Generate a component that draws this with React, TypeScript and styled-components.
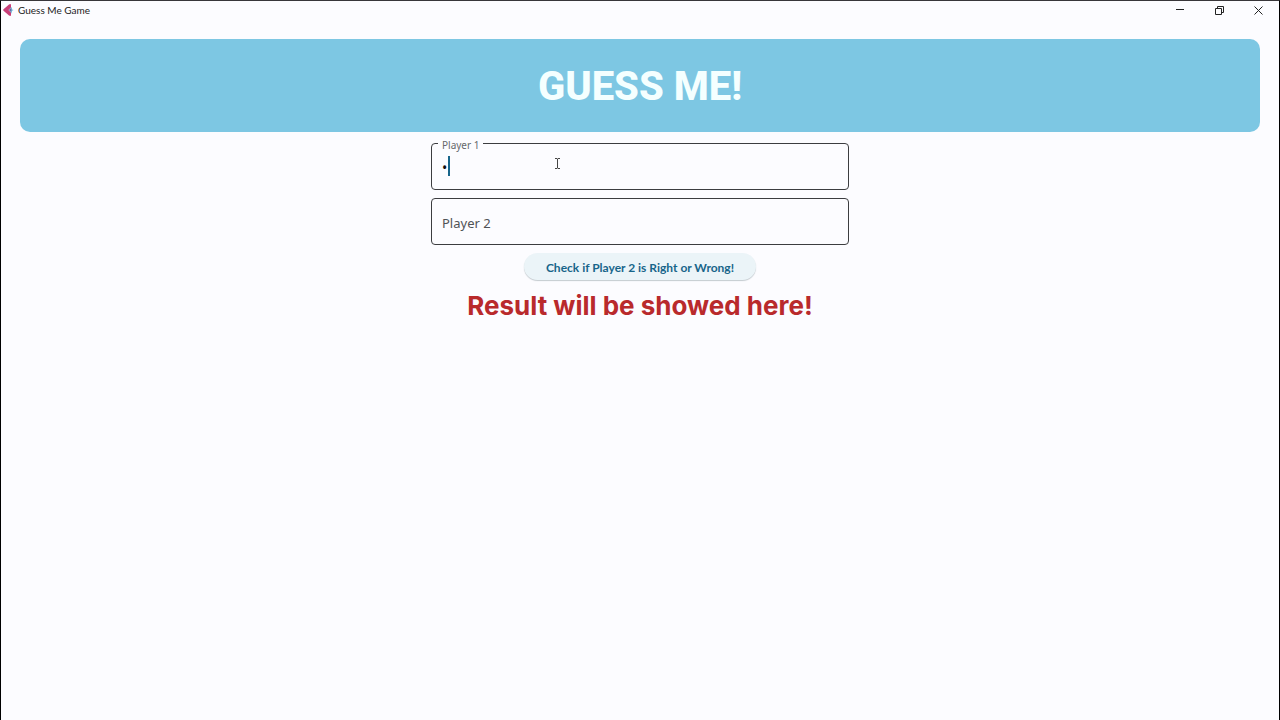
import React, { useState } from "react";
import styled, { createGlobalStyle } from "styled-components";

const GlobalStyle = createGlobalStyle`
  * { box-sizing: border-box; }
  body {
    margin: 0;
    background: #fcfcff;
    font-family: "Noto Sans", "Open Sans", sans-serif;
  }
`;

const Window = styled.div`
  min-height: 100vh;
  border: 1px solid #000;
  border-top-color: #38363a;
  border-bottom: 0;
  background: #fcfcff;
`;

const TitleBar = styled.header`
  display: flex;
  align-items: center;
  justify-content: space-between;
  height: 18px;
  padding: 0 1px 0 2px;
`;

const AppName = styled.div`
  display: flex;
  align-items: center;
  gap: 4px;
  font-family: Lato, sans-serif;
  font-size: 10px;
  line-height: 18px;
  color: #222;
`;

const WindowControls = styled.div`
  display: flex;
`;

const WindowButton = styled.button`
  display: flex;
  align-items: center;
  justify-content: center;
  width: 39px;
  height: 16px;
  padding: 0;
  border: 0;
  background: transparent;
  color: #222;
`;

const Content = styled.main`
  display: flex;
  flex-direction: column;
  align-items: center;
  gap: 8px;
  padding: 20px 19px;
`;

const Banner = styled.div`
  display: flex;
  align-items: center;
  justify-content: center;
  width: 100%;
  padding: 24px 16px 21px;
  margin-bottom: 3px;
  border-radius: 10px;
  background: #7dc7e3;
`;

const Title = styled.h1`
  margin: 0;
  font-family: Roboto, sans-serif;
  font-size: 40px;
  font-weight: 800;
  line-height: 48px;
  color: #f4ffff;
`;

const Field = styled.div`
  position: relative;
  width: 100%;
  max-width: 418px;
`;

const FieldInput = styled.input`
  display: block;
  width: 100%;
  height: 47px;
  padding: 2px 10px 0;
  border: 1px solid #3c3d40;
  border-radius: 4px;
  outline: 0;
  background: transparent;
  color: #111;
  caret-color: transparent;
  font-family: "Noto Sans", sans-serif;
  font-size: 14px;
`;

const FieldLabel = styled.label<{ $floating: boolean }>`
  position: absolute;
  top: ${(p) => (p.$floating ? "-6px" : "16px")};
  left: 7px;
  padding: 0 4px;
  background: #fcfcff;
  color: ${(p) => (p.$floating ? "#65686c" : "#505356")};
  font-size: ${(p) => (p.$floating ? "10px" : "13px")};
  line-height: ${(p) => (p.$floating ? "16px" : "18px")};
  pointer-events: none;
`;

const Caret = styled.span`
  position: absolute;
  top: 13px;
  left: 17px;
  width: 2px;
  height: 20px;
  background: #17658a;
`;

const Pointer = styled.svg`
  position: absolute;
  top: 14px;
  left: 123px;
  pointer-events: none;
`;

const CheckButton = styled.button`
  height: 27px;
  padding: 2px 22px 0;
  border: 0;
  border-radius: 14px;
  background: #ebf4f8;
  box-shadow: 0 1px 1px #c4cbd0;
  color: #17658a;
  font-family: Lato, sans-serif;
  font-size: 12px;
  font-weight: 700;
  line-height: 25px;
`;

const Result = styled.p`
  margin: 0;
  font-family: Inter, sans-serif;
  font-size: 26px;
  font-weight: 700;
  line-height: 36px;
  color: #b92a2c;
`;

type PlayerFieldProps = {
  id: string;
  label: string;
  initial?: string;
  children?: React.ReactNode;
};

function PlayerField({ id, label, initial = "", children }: PlayerFieldProps) {
  const [value, setValue] = useState(initial);
  return (
    <Field>
      <FieldInput id={id} type="password" value={value} onChange={(e) => setValue(e.target.value)} />
      <FieldLabel htmlFor={id} $floating={value !== ""}>{label}</FieldLabel>
      {children}
    </Field>
  );
}

export default function App() {
  return (
    <>
      <GlobalStyle />
      <Window>
        <TitleBar>
          <AppName>
            <svg width="11" height="12" viewBox="0 0 11 12" aria-hidden="true">
              <path d="M7 2.500 9 3.500 8.500 5 10.500 6 8.500 7.500 9 9 7 10Z" fill="#7fd0ea" />
              <path d="M6 .5Q8-.5 8 1v2.500L5.500 6 8 8.500V11q0 1.500-2 .5L.8 7Q-.5 6 .8 5Z" fill="#c83f78" />
              <path d="M8.500 4v4L5.500 6Z" fill="#6866a2" />
            </svg>
            Guess Me Game
          </AppName>
          <WindowControls>
            <WindowButton aria-label="Minimize">
              <svg width="9" height="9" viewBox="0 0 9 9" stroke="currentColor"><path d="M0 3.500h8" /></svg>
            </WindowButton>
            <WindowButton aria-label="Restore">
              <svg width="9" height="9" viewBox="0 0 9 9" fill="none" stroke="currentColor">
                <path d="M.5 2.500h6v6h-6ZM2.500 2.500v-2h6v6h-2" />
              </svg>
            </WindowButton>
            <WindowButton aria-label="Close">
              <svg width="9" height="9" viewBox="0 0 9 9" stroke="currentColor"><path d="m.5.5 8 8m0-8-8 8" /></svg>
            </WindowButton>
          </WindowControls>
        </TitleBar>
        <Content>
          <Banner>
            <Title>GUESS ME!</Title>
          </Banner>
          <PlayerField id="player-1" label="Player 1" initial="a">
            <Caret />
            <Pointer width="7" height="13" viewBox="0 0 7 13" fill="none" stroke="#444" aria-hidden="true">
              <path d="M1 1.500h2l.5.5.5-.5h2M3.500 2v9M1 11.500h2l.5-.5.5.5h2" />
            </Pointer>
          </PlayerField>
          <PlayerField id="player-2" label="Player 2" />
          <CheckButton>Check if Player 2 is Right or Wrong!</CheckButton>
          <Result>Result will be showed here!</Result>
        </Content>
      </Window>
    </>
  );
}
